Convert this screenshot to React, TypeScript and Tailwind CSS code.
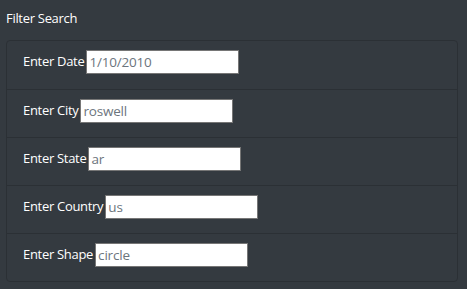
import * as React from 'react';

// ──────────────────────────────────────────────────────────────────────────────
// Filter rows
// ──────────────────────────────────────────────────────────────────────────────
const filters = [
  { id: 'date', label: 'Enter Date', value: '1/10/2010' },
  { id: 'city', label: 'Enter City', value: 'roswell' },
  { id: 'state', label: 'Enter State', value: 'ar' },
  { id: 'country', label: 'Enter Country', value: 'us' },
  { id: 'shape', label: 'Enter Shape', value: 'circle' },
];

function FilterRow({ id, label, value, first }: { id: string; label: string; value: string; first: boolean }) {
  return (
    <li className={`h-[48px] pl-[16px] pt-[9px] ${first ? '' : 'border-t border-[#2b3035]'}`}>
      <div className="flex items-center">
        <label htmlFor={id} className="text-[13px] tracking-[-0.3px] text-white mr-[2px]">
          {label}
        </label>
        <input
          id={id}
          type="text"
          defaultValue={value}
          className="w-[153px] h-[24px] bg-white border border-[#767676] px-[2px] text-[13.5px] tracking-[-0.2px] text-[#6c757d] outline-none"
        />
      </div>
    </li>
  );
}

export default function App() {
  return (
    <div
      className="w-[467px] h-[289px] bg-[#343a40] px-[6px] pt-[9px]"
      style={{ fontFamily: '"Open Sans", "Noto Sans", sans-serif' }}
    >
      <h5 className="text-[13px] tracking-[-0.3px] text-white leading-[18px] mb-[13px]">Filter Search</h5>
      <ul className="w-[452px] border border-[#2b3035] rounded-[4px]">
        {filters.map((f, i) => (
          <FilterRow key={f.id} {...f} first={i === 0} />
        ))}
      </ul>
    </div>
  );
}
